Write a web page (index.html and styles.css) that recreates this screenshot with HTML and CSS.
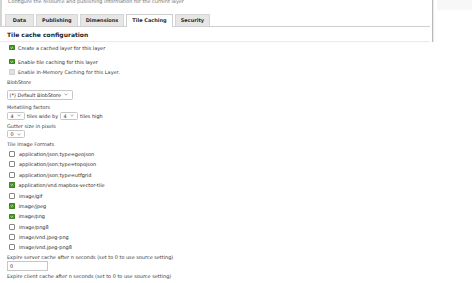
FILE: index.html
```html
<!DOCTYPE html>
<html lang="en">
<head>
<meta charset="utf-8">
<title>Tile Caching</title>
<link rel="stylesheet" href="styles.css">
</head>
<body>
<div class="top">
  <div class="panel">
    <div class="head-area">
      <div class="desc">Configure the resource and publishing information for the current layer</div>
      <div class="tabs">
        <div class="tab tab-data">Data</div>
        <div class="tab">Publishing</div>
        <div class="tab">Dimensions</div>
        <div class="tab active">Tile Caching</div>
        <div class="tab">Security</div>
      </div>
    </div>
    <h2 class="heading">Tile cache configuration</h2>
  </div>
  <div class="side"><div class="side-block"></div></div>
</div>

<div class="form">
  <div class="check r1"><span class="cb on"><svg viewBox="0 0 10 10"><path d="M2 5.2 L4.2 7.4 L8 2.8"/></svg></span>Create a cached layer for this layer</div>
  <div class="check r2"><span class="cb on"><svg viewBox="0 0 10 10"><path d="M2 5.2 L4.2 7.4 L8 2.8"/></svg></span>Enable tile caching for this layer</div>
  <div class="check r3"><span class="cb dis"></span>Enable In-Memory Caching for this Layer.</div>

  <div class="label l-blob">BlobStore</div>
  <div class="select sel-blob"><span>(*) Default BlobStore</span><svg class="chev" viewBox="0 0 6 4"><path d="M0.8 1 L3 3 L5.2 1"/></svg></div>

  <div class="label l-meta">Metatiling factors</div>
  <div class="meta-row">
    <div class="select sel-sm"><span>4</span><svg class="chev" viewBox="0 0 6 4"><path d="M0.8 1 L3 3 L5.2 1"/></svg></div>
    <span>tiles wide by</span>
    <div class="select sel-sm"><span>4</span><svg class="chev" viewBox="0 0 6 4"><path d="M0.8 1 L3 3 L5.2 1"/></svg></div>
    <span>tiles high</span>
  </div>

  <div class="label l-gutter">Gutter size in pixels</div>
  <div class="select sel-sm sel-gutter"><span>0</span><svg class="chev" viewBox="0 0 6 4"><path d="M0.8 1 L3 3 L5.2 1"/></svg></div>

  <div class="label l-formats">Tile Image Formats</div>
  <div class="formats">
    <div class="fmt"><span class="cb off"></span>application/json;type=geojson</div>
    <div class="fmt"><span class="cb off"></span>application/json;type=topojson</div>
    <div class="fmt"><span class="cb off"></span>application/json;type=utfgrid</div>
    <div class="fmt"><span class="cb on"><svg viewBox="0 0 10 10"><path d="M2 5.2 L4.2 7.4 L8 2.8"/></svg></span>application/vnd.mapbox-vector-tile</div>
    <div class="fmt"><span class="cb off"></span>image/gif</div>
    <div class="fmt"><span class="cb on"><svg viewBox="0 0 10 10"><path d="M2 5.2 L4.2 7.4 L8 2.8"/></svg></span>image/jpeg</div>
    <div class="fmt"><span class="cb on"><svg viewBox="0 0 10 10"><path d="M2 5.2 L4.2 7.4 L8 2.8"/></svg></span>image/png</div>
    <div class="fmt"><span class="cb off"></span>image/png8</div>
    <div class="fmt"><span class="cb off"></span>image/vnd.jpeg-png</div>
    <div class="fmt"><span class="cb off"></span>image/vnd.jpeg-png8</div>
  </div>

  <div class="label l-expire">Expire server cache after n seconds (set to 0 to use source setting)</div>
  <div class="input">0</div>
  <div class="label l-client">Expire client cache after n seconds (set to 0 to use source setting)</div>
</div>
</body>
</html>
```

FILE: styles.css
```css
* { box-sizing: border-box; }

html, body {
  margin: 0;
  padding: 0;
  background: #fff;
}

body {
  width: 474px;
  height: 283px;
  overflow: hidden;
  font-family: "DejaVu Sans", Verdana, sans-serif;
  font-size: 4.95px;
  color: #2b2b2b;
}

.top {
  display: flex;
}

.panel {
  width: 433px;
  border-right: 1px solid #b9b9b9;
  box-shadow: 1px 0 1px rgba(0, 0, 0, 0.08);
}

.head-area {
  border-left: 2px solid #d4d4d4;
}

.desc {
  margin: -2px 0 0 6px;
  height: 6px;
  line-height: 6px;
  color: #6f6f6f;
  white-space: nowrap;
}

.tabs {
  display: flex;
  gap: 2px;
  margin: 10px 2px 0 0;
  padding-left: 3px;
  height: 13px;
  border-bottom: 1px solid #cfcfcf;
}

.tab {
  height: 12px;
  line-height: 11px;
  padding: 0 5px;
  font-size: 5px;
  font-weight: bold;
  color: #2b2b2b;
  text-align: center;
  background: #e6e6e6;
  border: 1px solid #d6d6d6;
  border-bottom: none;
  white-space: nowrap;
}

.tab-data {
  min-width: 29px;
}

.tab.active {
  background: #fff;
  border-color: #cdcdcd;
  height: 13px;
}

.heading {
  margin: 0 2px 0 0;
  padding: 3.5px 0 2.5px 7px;
  font-size: 6px;
  line-height: 8px;
  font-weight: bold;
  color: #1e1e1e;
  border-bottom: 1px solid #ecece4;
}

.side {
  flex: 1;
  padding: 0 2px 0 4px;
}

.side-block {
  height: 10px;
  background: #f7f7f7;
}

.form {
  display: flex;
  flex-direction: column;
  align-items: flex-start;
}

.check {
  display: flex;
  align-items: center;
  gap: 3.5px;
  height: 10px;
  padding-left: 9px;
  white-space: nowrap;
}

.r1 { margin-top: 0.5px; }
.r2 { margin-top: 4px; }
.r3 { margin-top: 0.5px; color: #3a3a3a; }

.cb {
  display: inline-flex;
  align-items: center;
  justify-content: center;
  flex: none;
  width: 5.5px;
  height: 5.5px;
  border-radius: 0.8px;
}

.cb svg {
  width: 5.5px;
  height: 5.5px;
}

.cb svg path {
  fill: none;
  stroke: #fff;
  stroke-width: 1.8;
}

.cb.on {
  background: #4c9b2c;
  border: 0.5px solid #3d8021;
}

.cb.dis {
  background: #e0e0e0;
  border: 0.5px solid #d0d0d0;
}

.cb.off {
  width: 6px;
  height: 6px;
  background: #fff;
  border: 0.7px solid #858585;
  border-radius: 1px;
}

.label {
  height: 8px;
  line-height: 8px;
  padding-left: 7px;
  white-space: nowrap;
  color: #3a3a3a;
}

.l-blob { margin-top: 0.7px; }
.l-meta { margin-top: 3.3px; }
.l-gutter { margin-top: 1.7px; }
.l-formats { margin-top: 1.8px; }
.l-expire { margin-top: 1.5px; height: 7px; line-height: 7px; }
.l-client { margin-top: 1px; }

.select {
  display: flex;
  align-items: center;
  justify-content: space-between;
  background: #fff;
  border: 0.7px solid #c6c6c6;
  border-radius: 1.5px;
  white-space: nowrap;
  color: #2b2b2b;
}

.chev {
  width: 4px;
  height: 3px;
  flex: none;
}

.chev path {
  fill: none;
  stroke: #555;
  stroke-width: 0.8;
}

.sel-blob {
  margin: 4.3px 0 0 7px;
  width: 66px;
  height: 10px;
  padding: 0 4px 0 1.5px;
}

.meta-row {
  display: flex;
  align-items: center;
  gap: 2px;
  margin: 0.7px 0 0 7px;
  height: 8px;
  white-space: nowrap;
}

.sel-sm {
  width: 18px;
  height: 8px;
  padding: 0 3px 0 2.5px;
}

.sel-gutter {
  margin: 0.8px 0 0 7px;
}

.formats {
  margin-top: 0.5px;
}

.fmt {
  display: flex;
  align-items: center;
  gap: 4px;
  height: 10.4px;
  padding-left: 9px;
  white-space: nowrap;
}

.input {
  margin: 0.2px 0 0 7px;
  width: 41px;
  height: 10px;
  line-height: 9px;
  padding-left: 2px;
  border: 0.7px solid #c6c6c6;
  background: #fff;
}
```
